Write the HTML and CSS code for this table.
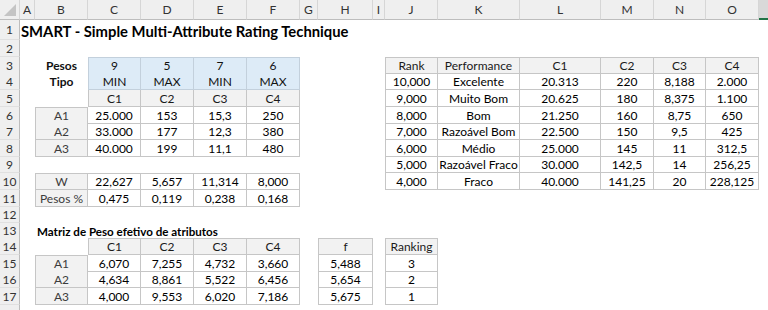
FILE: index.html
```html
<!DOCTYPE html>
<html>
<head>
<meta charset="utf-8">
<link rel="stylesheet" href="styles.css">
</head>
<body>
<div class="sheet">
  <div class="r hd">
    <span class="corner"><svg width="12" height="12" viewBox="0 0 12 12"><polygon points="12,0 12,12 0,12" fill="#c4c4c4"/></svg></span>
    <span>A</span><span>B</span><span>C</span><span>D</span><span>E</span><span>F</span><span>G</span><span>H</span><span>I</span><span>J</span><span>K</span><span>L</span><span>M</span><span>N</span><span>O</span><span class="sel"></span>
  </div>
  <div class="r h20">
    <span class="n">1</span><span class="title">SMART - Simple Multi-Attribute Rating Technique</span><i></i><i></i><i></i><i></i><i></i><i></i><i></i><i></i><i></i><i></i><i></i><i></i><i></i><i></i><i></i>
  </div>
  <div class="r h17">
    <span class="n">2</span><i></i><i></i><i></i><i></i><i></i><i></i><i></i><i></i><i></i><i></i><i></i><i></i><i></i><i></i><i></i><i></i>
  </div>
  <div class="r h16">
    <span class="n">3</span><i></i><span class="bold">Pesos</span>
    <span class="c bl t l">9</span><span class="c bl t">5</span><span class="c bl t">7</span><span class="c bl t">6</span>
    <i></i><i></i><i></i>
    <span class="c gr t l">Rank</span><span class="c gr t">Performance</span><span class="c gr t">C1</span><span class="c gr t">C2</span><span class="c gr t">C3</span><span class="c gr t">C4</span><i></i>
  </div>
  <div class="r h17">
    <span class="n">4</span><i></i><span class="bold">Tipo</span>
    <span class="c bl l">MIN</span><span class="c bl">MAX</span><span class="c bl">MIN</span><span class="c bl">MAX</span>
    <i></i><i></i><i></i>
    <span class="c l">10,000</span><span class="c">Excelente</span><span class="c">20.313</span><span class="c">220</span><span class="c">8,188</span><span class="c">2.000</span><i></i>
  </div>
  <div class="r h17">
    <span class="n">5</span><i></i><i></i>
    <span class="c gr l">C1</span><span class="c gr">C2</span><span class="c gr">C3</span><span class="c gr">C4</span>
    <i></i><i></i><i></i>
    <span class="c l">9,000</span><span class="c">Muito Bom</span><span class="c">20.625</span><span class="c">180</span><span class="c">8,375</span><span class="c">1.100</span><i></i>
  </div>
  <div class="r h16">
    <span class="n">6</span><i></i>
    <span class="c gr lab t l">A1</span><span class="c">25.000</span><span class="c">153</span><span class="c">15,3</span><span class="c">250</span>
    <i></i><i></i><i></i>
    <span class="c l">8,000</span><span class="c">Bom</span><span class="c">21.250</span><span class="c">160</span><span class="c">8,75</span><span class="c">650</span><i></i>
  </div>
  <div class="r h17">
    <span class="n">7</span><i></i>
    <span class="c gr lab l">A2</span><span class="c">33.000</span><span class="c">177</span><span class="c">12,3</span><span class="c">380</span>
    <i></i><i></i><i></i>
    <span class="c l">7,000</span><span class="c">Razoável Bom</span><span class="c">22.500</span><span class="c">150</span><span class="c">9,5</span><span class="c">425</span><i></i>
  </div>
  <div class="r h17">
    <span class="n">8</span><i></i>
    <span class="c gr lab l">A3</span><span class="c">40.000</span><span class="c">199</span><span class="c">11,1</span><span class="c">480</span>
    <i></i><i></i><i></i>
    <span class="c l">6,000</span><span class="c">Médio</span><span class="c">25.000</span><span class="c">145</span><span class="c">11</span><span class="c">312,5</span><i></i>
  </div>
  <div class="r h16">
    <span class="n">9</span><i></i><i></i><i></i><i></i><i></i><i></i>
    <i></i><i></i><i></i>
    <span class="c l">5,000</span><span class="c">Razoável Fraco</span><span class="c">30.000</span><span class="c">142,5</span><span class="c">14</span><span class="c">256,25</span><i></i>
  </div>
  <div class="r h17">
    <span class="n">10</span><i></i>
    <span class="c gr lab t l">W</span><span class="c t">22,627</span><span class="c t">5,657</span><span class="c t">11,314</span><span class="c t">8,000</span>
    <i></i><i></i><i></i>
    <span class="c l">4,000</span><span class="c">Fraco</span><span class="c">40.000</span><span class="c">141,25</span><span class="c">20</span><span class="c">228,125</span><i></i>
  </div>
  <div class="r h17">
    <span class="n">11</span><i></i>
    <span class="c gr lab l">Pesos %</span><span class="c">0,475</span><span class="c">0,119</span><span class="c">0,238</span><span class="c">0,168</span>
    <i></i><i></i><i></i><i></i><i></i><i></i><i></i><i></i><i></i><i></i>
  </div>
  <div class="r h16">
    <span class="n">12</span><i></i><i></i><i></i><i></i><i></i><i></i><i></i><i></i><i></i><i></i><i></i><i></i><i></i><i></i><i></i><i></i>
  </div>
  <div class="r h15">
    <span class="n">13</span><i></i><span class="subtitle">Matriz de Peso efetivo de atributos</span><i></i><i></i><i></i><i></i><i></i><i></i><i></i><i></i><i></i><i></i><i></i><i></i><i></i><i></i>
  </div>
  <div class="r h17">
    <span class="n">14</span><i></i><i></i>
    <span class="c gr t l">C1</span><span class="c gr t">C2</span><span class="c gr t">C3</span><span class="c gr t">C4</span>
    <i></i><span class="c gr t l">f</span><i></i><span class="c gr t l">Ranking</span><i></i><i></i><i></i><i></i><i></i><i></i>
  </div>
  <div class="r h16">
    <span class="n">15</span><i></i>
    <span class="c gr lab t l">A1</span><span class="c">6,070</span><span class="c">7,255</span><span class="c">4,732</span><span class="c">3,660</span>
    <i></i><span class="c l">5,488</span><i></i><span class="c l">3</span><i></i><i></i><i></i><i></i><i></i><i></i>
  </div>
  <div class="r h17">
    <span class="n">16</span><i></i>
    <span class="c gr lab l">A2</span><span class="c">4,634</span><span class="c">8,861</span><span class="c">5,522</span><span class="c">6,456</span>
    <i></i><span class="c l">5,654</span><i></i><span class="c l">2</span><i></i><i></i><i></i><i></i><i></i><i></i>
  </div>
  <div class="r h17">
    <span class="n">17</span><i></i>
    <span class="c gr lab l">A3</span><span class="c">4,000</span><span class="c">9,553</span><span class="c">6,020</span><span class="c">7,186</span>
    <i></i><span class="c l">5,675</span><i></i><span class="c l">1</span><i></i><i></i><i></i><i></i><i></i><i></i>
  </div>
  <div class="r h17">
    <span class="n">18</span><i></i><i></i><i></i><i></i><i></i><i></i><i></i><i></i><i></i><i></i><i></i><i></i><i></i><i></i><i></i><i></i>
  </div>
</div>
</body>
</html>
```

FILE: styles.css
```css
* { box-sizing: border-box; margin: 0; padding: 0; }
html, body { background: #ffffff; }
body {
  margin: 0;
  width: 768px;
  height: 310px;
  overflow: hidden;
  font-family: Lato, "Liberation Sans", sans-serif;
  font-size: 12px;
  color: #000;
}
.sheet { display: flex; flex-direction: column; }
.r {
  display: grid;
  grid-template-columns: 20px 15px 53px 53px 53px 53px 53px 18px 55px 12px 53px 82px 81px 53px 52px 53px 9px;
}
.r > * {
  display: flex;
  align-items: center;
  justify-content: center;
  white-space: nowrap;
  font-style: normal;
  min-width: 0;
}
.h20 { height: 20px; }
.h17 { height: 17px; }
.h16 { height: 16px; }
.h15 { height: 15px; }

.hd { height: 20px; background: #efefef; }
.hd > span {
  color: #333;
  border-right: 1px solid #d6d6d6;
  border-bottom: 1px solid #bdbdbd;
  font-size: 12px;
}
.hd > .corner { justify-content: flex-end; align-items: flex-end; padding: 0 3px 3px 0; }
.hd > .sel { background: #d9d9d9; border-bottom: 2px solid #217346; border-right: none; }

.n {
  background: #efefef;
  color: #333;
  border-right: 1px solid #bdbdbd;
  border-bottom: 1px solid #e0e0e0;
  font-size: 12px;
}

.title {
  justify-content: flex-start !important;
  overflow: visible;
  font-weight: 700;
  font-size: 14.8px;
  color: #000;
  padding-left: 1px;
  padding-top: 1px;
}
.subtitle {
  justify-content: flex-start !important;
  overflow: visible;
  font-weight: 700;
  font-size: 11.6px;
  color: #000;
  padding-left: 2px;
}
.bold { font-weight: 700; color: #111; }

.c {
  border-right: 1px solid #c6c6c6;
  border-bottom: 1px solid #c6c6c6;
  color: #000;
}
.c.t { border-top: 1px solid #c6c6c6; }
.c.l { border-left: 1px solid #c6c6c6; }
.c.bl { background: #ddebf7; border-color: #c3d0dc; color: #111; }
.c.gr { background: #f2f2f2; color: #1a1a1a; }
.c.lab { color: #3c3c3c; }
```
